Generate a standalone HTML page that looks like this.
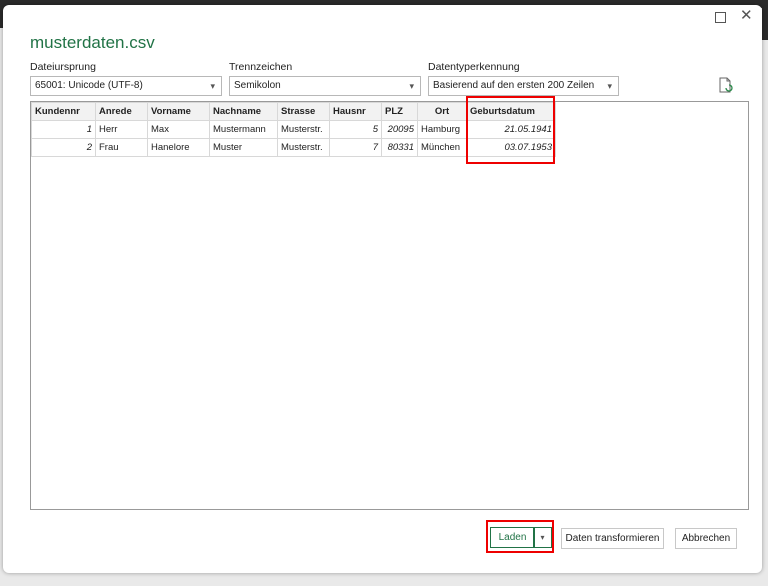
<!DOCTYPE html><html><head><style>
body{margin:0;width:768px;height:586px;position:relative;overflow:hidden;background:#e9e9e9;font-family:"Liberation Sans",sans-serif;}
.a{position:absolute}
.dlg{left:3px;top:5px;width:759px;height:568px;background:#fff;border-radius:6px;box-shadow:0 0 4px rgba(0,0,0,.35)}
.lbl{font-size:10.5px;color:#222}
.dd{border:1px solid #b8b8b8;font-size:10px;line-height:18px;padding-left:4px;box-sizing:border-box;height:20px;color:#222}
.dd:after{content:"▾";position:absolute;right:6px;top:0;font-size:9px;color:#555}
table{border-collapse:collapse;font-size:9.5px;color:#222;table-layout:fixed}
td,th{border:1px solid #d8d8d8;height:17px;padding:0 3px;white-space:nowrap;overflow:hidden}
th{background:#f2f2f2;text-align:left;font-weight:bold}
.r{text-align:right;font-style:italic}
.btn{border:1px solid #c8c8c8;height:19px;font-size:10px;line-height:19px;text-align:center;color:#222}
</style></head><body>
<div class="a" style="left:0;top:0;width:768px;height:8px;background:#2b2b2b"></div>
<div class="a" style="left:0;top:0;width:4px;height:28px;background:#2b2b2b"></div>
<div class="a" style="left:762px;top:0;width:6px;height:40px;background:#2b2b2b"></div>
<div class="a dlg"></div>
<div class="a" style="left:715px;top:12px;width:9px;height:9px;border:1px solid #555"></div>
<div class="a" style="left:740px;top:6px;font-size:15px;color:#555">✕</div>
<div class="a" style="left:30px;top:33px;font-size:17px;color:#217346">musterdaten.csv</div>
<div class="a lbl" style="left:30px;top:61px">Dateiursprung</div>
<div class="a lbl" style="left:229px;top:61px">Trennzeichen</div>
<div class="a lbl" style="left:428px;top:61px">Datentyperkennung</div>
<div class="a dd" style="left:30px;top:76px;width:192px">65001: Unicode (UTF-8)</div>
<div class="a dd" style="left:229px;top:76px;width:192px">Semikolon</div>
<div class="a dd" style="left:428px;top:76px;width:191px">Basierend auf den ersten 200 Zeilen</div>
<svg class="a" style="left:718px;top:77px" width="16" height="16"><path d="M2 1h7l3 3v11H2z M9 1v3h3" fill="none" stroke="#666"/><path d="M8 11a3 3 0 1 0 3-3" fill="none" stroke="#2a8a4a" stroke-width="1.3"/></svg>
<div class="a" style="left:30px;top:101px;width:719px;height:409px;border:1px solid #999;box-sizing:border-box"></div>
<table class="a" style="left:31px;top:102px;width:524px">
<colgroup><col style="width:64px"><col style="width:52px"><col style="width:62px"><col style="width:68px"><col style="width:52px"><col style="width:52px"><col style="width:36px"><col style="width:49px"><col style="width:89px"></colgroup>
<tr><th>Kundennr</th><th>Anrede</th><th>Vorname</th><th>Nachname</th><th>Strasse</th><th>Hausnr</th><th>PLZ</th><th style="text-align:center">Ort</th><th>Geburtsdatum</th></tr>
<tr><td class="r">1</td><td>Herr</td><td>Max</td><td>Mustermann</td><td>Musterstr.</td><td class="r">5</td><td class="r">20095</td><td>Hamburg</td><td class="r">21.05.1941</td></tr>
<tr><td class="r">2</td><td>Frau</td><td>Hanelore</td><td>Muster</td><td>Musterstr.</td><td class="r">7</td><td class="r">80331</td><td>München</td><td class="r">03.07.1953</td></tr>
</table>
<div class="a" style="left:466px;top:96px;width:89px;height:68px;border:2px solid #e00;box-sizing:border-box"></div>
<div class="a" style="left:486px;top:520px;width:68px;height:33px;border:2px solid #e00;box-sizing:border-box"></div>
<div class="a btn" style="left:490px;top:527px;width:43px;border-color:#217346;color:#217346">Laden</div>
<div class="a btn" style="left:533px;top:527px;width:17px;border-color:#217346;font-size:8px;color:#555">▾</div>
<div class="a btn" style="left:561px;top:528px;width:101px">Daten transformieren</div>
<div class="a btn" style="left:675px;top:528px;width:60px">Abbrechen</div>
</body></html>
